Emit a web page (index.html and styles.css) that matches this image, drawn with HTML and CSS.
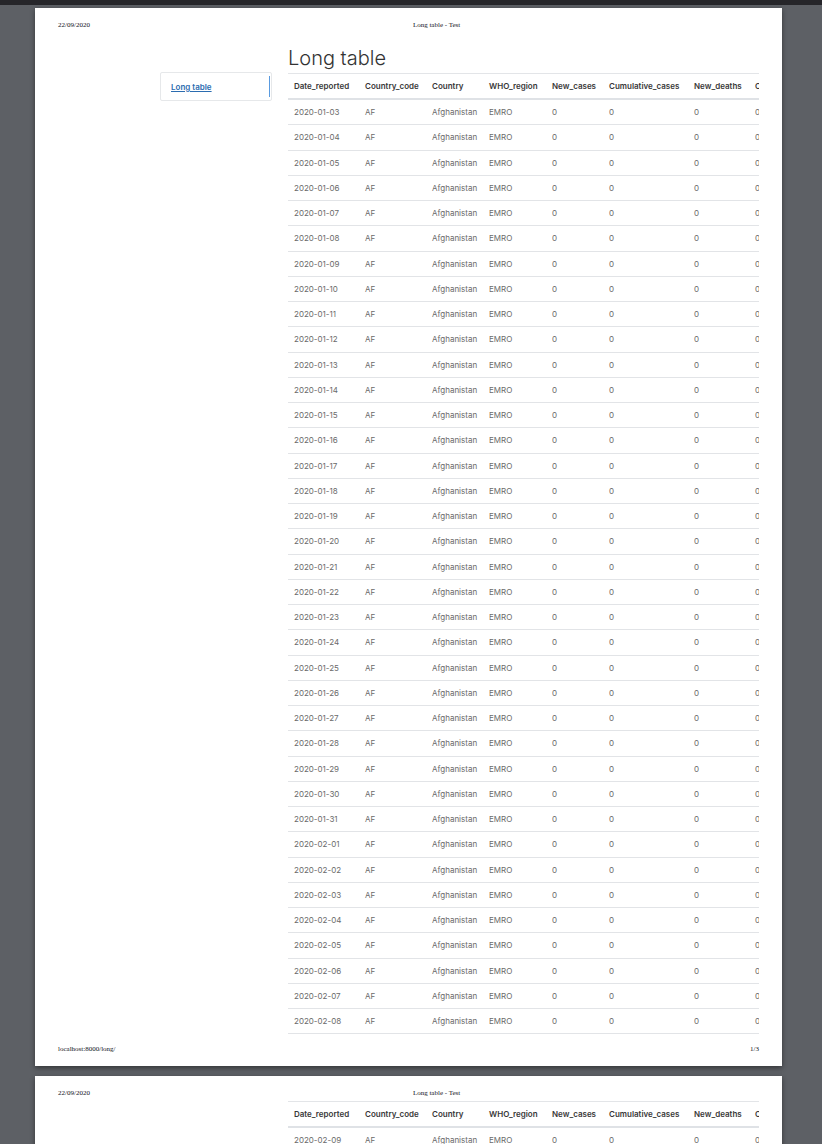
FILE: index.html
```html
<!DOCTYPE html>
<html lang="en">
<head>
<meta charset="utf-8">
<title>Long table - Test</title>
<link rel="stylesheet" href="styles.css">
</head>
<body>
<div class="toolbar"></div>
<div class="viewer">
  <section class="page">
    <div class="print-head"><span class="ph-date">22/09/2020</span><span class="ph-title">Long table - Test</span></div>
    <div class="layout">
      <div class="spacer"></div>
      <nav class="sidebar"><a href="#" class="side-link">Long table</a><span class="side-mark"></span></nav>
      <main class="main">
        <h1 class="title">Long table</h1>
        <div class="table-clip">
          <table class="data">
            <colgroup><col class="c1"><col class="c2"><col class="c3"><col class="c4"><col class="c5"><col class="c6"><col class="c7"><col class="c8"></colgroup>
            <thead><tr><th>Date_reported</th><th>Country_code</th><th>Country</th><th>WHO_region</th><th>New_cases</th><th>Cumulative_cases</th><th>New_deaths</th><th>Cumulative_deaths</th></tr></thead>
            <tbody>
              <tr><td>2020-01-03</td><td>AF</td><td>Afghanistan</td><td>EMRO</td><td>0</td><td>0</td><td>0</td><td>0</td></tr>
              <tr><td>2020-01-04</td><td>AF</td><td>Afghanistan</td><td>EMRO</td><td>0</td><td>0</td><td>0</td><td>0</td></tr>
              <tr><td>2020-01-05</td><td>AF</td><td>Afghanistan</td><td>EMRO</td><td>0</td><td>0</td><td>0</td><td>0</td></tr>
              <tr><td>2020-01-06</td><td>AF</td><td>Afghanistan</td><td>EMRO</td><td>0</td><td>0</td><td>0</td><td>0</td></tr>
              <tr><td>2020-01-07</td><td>AF</td><td>Afghanistan</td><td>EMRO</td><td>0</td><td>0</td><td>0</td><td>0</td></tr>
              <tr><td>2020-01-08</td><td>AF</td><td>Afghanistan</td><td>EMRO</td><td>0</td><td>0</td><td>0</td><td>0</td></tr>
              <tr><td>2020-01-09</td><td>AF</td><td>Afghanistan</td><td>EMRO</td><td>0</td><td>0</td><td>0</td><td>0</td></tr>
              <tr><td>2020-01-10</td><td>AF</td><td>Afghanistan</td><td>EMRO</td><td>0</td><td>0</td><td>0</td><td>0</td></tr>
              <tr><td>2020-01-11</td><td>AF</td><td>Afghanistan</td><td>EMRO</td><td>0</td><td>0</td><td>0</td><td>0</td></tr>
              <tr><td>2020-01-12</td><td>AF</td><td>Afghanistan</td><td>EMRO</td><td>0</td><td>0</td><td>0</td><td>0</td></tr>
              <tr><td>2020-01-13</td><td>AF</td><td>Afghanistan</td><td>EMRO</td><td>0</td><td>0</td><td>0</td><td>0</td></tr>
              <tr><td>2020-01-14</td><td>AF</td><td>Afghanistan</td><td>EMRO</td><td>0</td><td>0</td><td>0</td><td>0</td></tr>
              <tr><td>2020-01-15</td><td>AF</td><td>Afghanistan</td><td>EMRO</td><td>0</td><td>0</td><td>0</td><td>0</td></tr>
              <tr><td>2020-01-16</td><td>AF</td><td>Afghanistan</td><td>EMRO</td><td>0</td><td>0</td><td>0</td><td>0</td></tr>
              <tr><td>2020-01-17</td><td>AF</td><td>Afghanistan</td><td>EMRO</td><td>0</td><td>0</td><td>0</td><td>0</td></tr>
              <tr><td>2020-01-18</td><td>AF</td><td>Afghanistan</td><td>EMRO</td><td>0</td><td>0</td><td>0</td><td>0</td></tr>
              <tr><td>2020-01-19</td><td>AF</td><td>Afghanistan</td><td>EMRO</td><td>0</td><td>0</td><td>0</td><td>0</td></tr>
              <tr><td>2020-01-20</td><td>AF</td><td>Afghanistan</td><td>EMRO</td><td>0</td><td>0</td><td>0</td><td>0</td></tr>
              <tr><td>2020-01-21</td><td>AF</td><td>Afghanistan</td><td>EMRO</td><td>0</td><td>0</td><td>0</td><td>0</td></tr>
              <tr><td>2020-01-22</td><td>AF</td><td>Afghanistan</td><td>EMRO</td><td>0</td><td>0</td><td>0</td><td>0</td></tr>
              <tr><td>2020-01-23</td><td>AF</td><td>Afghanistan</td><td>EMRO</td><td>0</td><td>0</td><td>0</td><td>0</td></tr>
              <tr><td>2020-01-24</td><td>AF</td><td>Afghanistan</td><td>EMRO</td><td>0</td><td>0</td><td>0</td><td>0</td></tr>
              <tr><td>2020-01-25</td><td>AF</td><td>Afghanistan</td><td>EMRO</td><td>0</td><td>0</td><td>0</td><td>0</td></tr>
              <tr><td>2020-01-26</td><td>AF</td><td>Afghanistan</td><td>EMRO</td><td>0</td><td>0</td><td>0</td><td>0</td></tr>
              <tr><td>2020-01-27</td><td>AF</td><td>Afghanistan</td><td>EMRO</td><td>0</td><td>0</td><td>0</td><td>0</td></tr>
              <tr><td>2020-01-28</td><td>AF</td><td>Afghanistan</td><td>EMRO</td><td>0</td><td>0</td><td>0</td><td>0</td></tr>
              <tr><td>2020-01-29</td><td>AF</td><td>Afghanistan</td><td>EMRO</td><td>0</td><td>0</td><td>0</td><td>0</td></tr>
              <tr><td>2020-01-30</td><td>AF</td><td>Afghanistan</td><td>EMRO</td><td>0</td><td>0</td><td>0</td><td>0</td></tr>
              <tr><td>2020-01-31</td><td>AF</td><td>Afghanistan</td><td>EMRO</td><td>0</td><td>0</td><td>0</td><td>0</td></tr>
              <tr><td>2020-02-01</td><td>AF</td><td>Afghanistan</td><td>EMRO</td><td>0</td><td>0</td><td>0</td><td>0</td></tr>
              <tr><td>2020-02-02</td><td>AF</td><td>Afghanistan</td><td>EMRO</td><td>0</td><td>0</td><td>0</td><td>0</td></tr>
              <tr><td>2020-02-03</td><td>AF</td><td>Afghanistan</td><td>EMRO</td><td>0</td><td>0</td><td>0</td><td>0</td></tr>
              <tr><td>2020-02-04</td><td>AF</td><td>Afghanistan</td><td>EMRO</td><td>0</td><td>0</td><td>0</td><td>0</td></tr>
              <tr><td>2020-02-05</td><td>AF</td><td>Afghanistan</td><td>EMRO</td><td>0</td><td>0</td><td>0</td><td>0</td></tr>
              <tr><td>2020-02-06</td><td>AF</td><td>Afghanistan</td><td>EMRO</td><td>0</td><td>0</td><td>0</td><td>0</td></tr>
              <tr><td>2020-02-07</td><td>AF</td><td>Afghanistan</td><td>EMRO</td><td>0</td><td>0</td><td>0</td><td>0</td></tr>
              <tr><td>2020-02-08</td><td>AF</td><td>Afghanistan</td><td>EMRO</td><td>0</td><td>0</td><td>0</td><td>0</td></tr>
            </tbody>
          </table>
        </div>
      </main>
    </div>
    <div class="print-foot"><span>localhost:8000/long/</span><span>1/3</span></div>
  </section>
  <section class="page">
    <div class="print-head"><span class="ph-date">22/09/2020</span><span class="ph-title">Long table - Test</span></div>
    <div class="layout cont">
      <div class="spacer"></div>
      <div class="spacer"></div>
      <main class="main">
        <div class="table-clip">
          <table class="data">
            <colgroup><col class="c1"><col class="c2"><col class="c3"><col class="c4"><col class="c5"><col class="c6"><col class="c7"><col class="c8"></colgroup>
            <thead><tr><th>Date_reported</th><th>Country_code</th><th>Country</th><th>WHO_region</th><th>New_cases</th><th>Cumulative_cases</th><th>New_deaths</th><th>Cumulative_deaths</th></tr></thead>
            <tbody>
              <tr><td>2020-02-09</td><td>AF</td><td>Afghanistan</td><td>EMRO</td><td>0</td><td>0</td><td>0</td><td>0</td></tr>
              <tr><td>2020-02-10</td><td>AF</td><td>Afghanistan</td><td>EMRO</td><td>0</td><td>0</td><td>0</td><td>0</td></tr>
            </tbody>
          </table>
        </div>
      </main>
    </div>
  </section>
</div>
</body>
</html>
```

FILE: styles.css
```css
html, body {
  margin: 0;
  padding: 0;
}
body {
  background: #5d6065;
  height: 1144px;
  overflow: hidden;
  font-family: Inter, "Noto Sans", sans-serif;
}
.toolbar {
  height: 5px;
  background: #26262a;
}
.viewer {
  display: flex;
  flex-direction: column;
  align-items: flex-start;
  gap: 10px;
  padding: 3px 0 0 35px;
}
.page {
  width: 747px;
  height: 1058px;
  background: #fff;
  box-shadow: 0 2px 5px rgba(0, 0, 0, 0.45);
  display: flex;
  flex-direction: column;
  padding: 0 23px;
  box-sizing: border-box;
  flex-shrink: 0;
}
.print-head, .print-foot {
  font-family: "Liberation Serif", serif;
  font-size: 7px;
  color: #111122;
  display: flex;
  line-height: 8px;
}
.print-head {
  padding-top: 13px;
}
.ph-title {
  margin-left: 323px;
}
.print-foot {
  margin-top: auto;
  justify-content: space-between;
  padding-bottom: 13px;
}
.layout {
  display: grid;
  grid-template-columns: 102px 112px 1fr;
  column-gap: 0;
}
.layout .main {
  margin-left: 16px;
  min-width: 0;
}
.sidebar {
  margin-top: 43px;
  height: 29px;
  border: 1px solid #e6e8ea;
  border-radius: 2px;
  display: flex;
  align-items: center;
  justify-content: space-between;
  padding: 0 1px 0 10px;
  box-sizing: border-box;
}
.side-link {
  font-size: 8px;
  font-weight: 600;
  color: #2b6cb0;
  text-decoration: underline;
}
.side-mark {
  width: 1px;
  height: 21px;
  background: #5a9be0;
}
.title {
  margin: 16px 0 2px;
  font-size: 20px;
  font-weight: 300;
  line-height: 26px;
  color: #333;
}
.cont .main {
  margin-top: 4px;
}
.table-clip {
  overflow: hidden;
  width: 471px;
}
.data {
  border-collapse: collapse;
  table-layout: fixed;
  width: 541px;
  font-size: 8px;
  text-align: left;
}
.c1 { width: 71px; }
.c2 { width: 67px; }
.c3 { width: 57px; }
.c4 { width: 63px; }
.c5 { width: 57px; }
.c6 { width: 85px; }
.c7 { width: 61px; }
.c8 { width: 80px; }
.data th {
  height: 24px;
  padding: 0 6px;
  border-top: 1px solid #e3e5e8;
  border-bottom: 2px solid #dfe2e6;
  font-weight: 600;
  color: #383838;
  white-space: nowrap;
}
.data td {
  height: 24.25px;
  padding: 0 6px;
  border-bottom: 1px solid #e2e4e7;
  color: #6a6a6a;
  white-space: nowrap;
}
```
